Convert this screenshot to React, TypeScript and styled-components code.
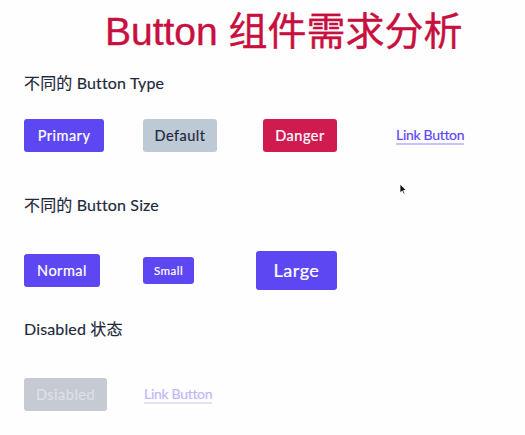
import React from 'react';
import styled, { createGlobalStyle } from 'styled-components';

const primary = '#5c47f2';
const font = 'Lato, "Noto Sans CJK SC", sans-serif';

const GlobalStyle = createGlobalStyle`
  html, body {
    margin: 0;
    padding: 0;
    background: #fefefe;
  }
  body {
    font-family: ${font};
  }
`;

const Page = styled.div`
  position: relative;
  width: 525px;
  height: 435px;
  padding: 0 24px;
  box-sizing: border-box;
  overflow: hidden;
`;

const Title = styled.h1`
  margin: 0;
  padding: 0 0 0 81px;
  height: 63px;
  line-height: 63px;
  font-family: "Liberation Sans", "Noto Sans CJK SC", sans-serif;
  font-size: 39px;
  font-weight: 400;
  color: #c8103e;
  white-space: nowrap;
  -webkit-text-stroke: 0.4px #c8103e;
`;

const Heading = styled.h2<{ $gap: number }>`
  margin: ${(p) => p.$gap}px 0 0;
  height: 20px;
  line-height: 20px;
  font-size: 16px;
  font-weight: 400;
  letter-spacing: 0.15px;
  color: #1e293b;
  -webkit-text-stroke: 0.15px #1e293b;
`;

const Row = styled.div<{ $gap: number }>`
  display: flex;
  align-items: center;
  height: 40px;
  margin-top: ${(p) => p.$gap}px;
`;

const Cell = styled.div<{ $w: number }>`
  flex: none;
  width: ${(p) => p.$w}px;
  display: flex;
  align-items: center;
`;

type Variant = 'primary' | 'default' | 'danger' | 'disabled';
type Size = 'normal' | 'small' | 'large';

const bg: Record<Variant, string> = {
  primary,
  default: '#bec9d6',
  danger: '#d01b50',
  disabled: '#c6cad2',
};
const fg: Record<Variant, string> = {
  primary: '#ffffff',
  default: '#1e293b',
  danger: '#ffffff',
  disabled: '#dde0e6',
};
const sizes: Record<Size, { h: number; fs: number }> = {
  normal: { h: 33, fs: 14.5 },
  small: { h: 27, fs: 11.5 },
  large: { h: 39, fs: 18 },
};

const Button = styled.button<{ $variant: Variant; $size: Size; $width: number }>`
  display: inline-flex;
  align-items: center;
  justify-content: center;
  width: ${(p) => p.$width}px;
  height: ${(p) => sizes[p.$size].h}px;
  padding: 0;
  border: none;
  border-radius: 3px;
  background: ${(p) => bg[p.$variant]};
  color: ${(p) => fg[p.$variant]};
  font-family: ${font};
  font-size: ${(p) => sizes[p.$size].fs}px;
  font-weight: 400;
  letter-spacing: 0.5px;
  -webkit-text-stroke: 0.2px ${(p) => fg[p.$variant]};
  cursor: ${(p) => (p.$variant === 'disabled' ? 'not-allowed' : 'pointer')};
`;

const LinkButton = styled.a<{ $disabled?: boolean }>`
  display: inline-block;
  font-size: 14px;
  font-weight: 400;
  letter-spacing: -0.3px;
  line-height: 17px;
  color: ${(p) => (p.$disabled ? '#c2b6fb' : primary)};
  -webkit-text-stroke: 0.2px ${(p) => (p.$disabled ? '#c2b6fb' : primary)};
  text-decoration: none;
  border-bottom: 2px solid ${(p) => (p.$disabled ? '#e6e0fd' : '#c9c1fa')};
`;

const Pointer = styled.svg`
  position: absolute;
  left: 399px;
  top: 183px;
`;

const App: React.FC = () => (
  <Page>
    <GlobalStyle />
    <Title>Button 组件需求分析</Title>

    <Heading $gap={10}>不同的 Button Type</Heading>
    <Row $gap={22}>
      <Cell $w={119}>
        <Button $variant="primary" $size="normal" $width={80}>Primary</Button>
      </Cell>
      <Cell $w={120}>
        <Button $variant="default" $size="normal" $width={74}>Default</Button>
      </Cell>
      <Cell $w={133}>
        <Button $variant="danger" $size="normal" $width={74}>Danger</Button>
      </Cell>
      <Cell $w={80}>
        <LinkButton href="#">Link Button</LinkButton>
      </Cell>
    </Row>

    <Heading $gap={40}>不同的 Button Size</Heading>
    <Row $gap={35}>
      <Cell $w={119}>
        <Button $variant="primary" $size="normal" $width={76}>Normal</Button>
      </Cell>
      <Cell $w={113}>
        <Button $variant="primary" $size="small" $width={51}>Small</Button>
      </Cell>
      <Cell $w={81}>
        <Button $variant="primary" $size="large" $width={81}>Large</Button>
      </Cell>
    </Row>

    <Heading $gap={29}>Disabled 状态</Heading>
    <Row $gap={35}>
      <Cell $w={120}>
        <Button $variant="disabled" $size="normal" $width={83} disabled>Dsiabled</Button>
      </Cell>
      <Cell $w={80}>
        <LinkButton $disabled href="#">Link Button</LinkButton>
      </Cell>
    </Row>

    <Pointer width="8" height="12" viewBox="0 0 8 12">
      <path d="M1 1 L1 10 L3.2 8 L4.8 11.2 L6 10.6 L4.5 7.5 L7.2 7.3 Z" fill="#111" stroke="#fff" strokeWidth="0.8" />
    </Pointer>
  </Page>
);

export default App;
